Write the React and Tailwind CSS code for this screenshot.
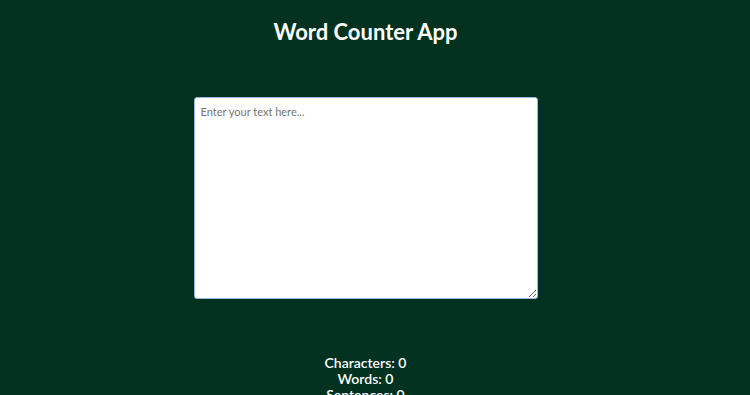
import React, { useState } from "react";

// Contador de palavras simples
export default function App() {
  const [text, setText] = useState("");

  const characters = text.length;
  const words = text.trim() ? text.trim().split(/\s+/).length : 0;
  const sentences = text.split(/[.!?]+/).filter((s) => s.trim()).length;

  return (
    <main className="min-h-screen bg-[#013220] font-['Lato',sans-serif] text-white overflow-hidden">
      <div className="w-[731px] flex flex-col items-center">
        {/* Título */}
        <h1 className="mt-[18px] text-[22px] leading-[28px] font-bold">
          Word Counter App
        </h1>

        {/* Área de texto */}
        <textarea
          value={text}
          onChange={(e) => setText(e.target.value)}
          placeholder="Enter your text here..."
          className="mt-[51px] w-[344px] h-[202px] bg-white text-black text-[11px] px-[6px] py-[6px] rounded-[3px] border border-[#9ab8e6] outline-none placeholder:text-[#757575]"
        />

        {/* Estatísticas */}
        <div className="mt-[56px] flex flex-col items-center text-[14px] leading-[16px] font-semibold">
          <p>Characters: {characters}</p>
          <p>Words: {words}</p>
          <p>Sentences: {sentences}</p>
        </div>
      </div>
    </main>
  );
}
